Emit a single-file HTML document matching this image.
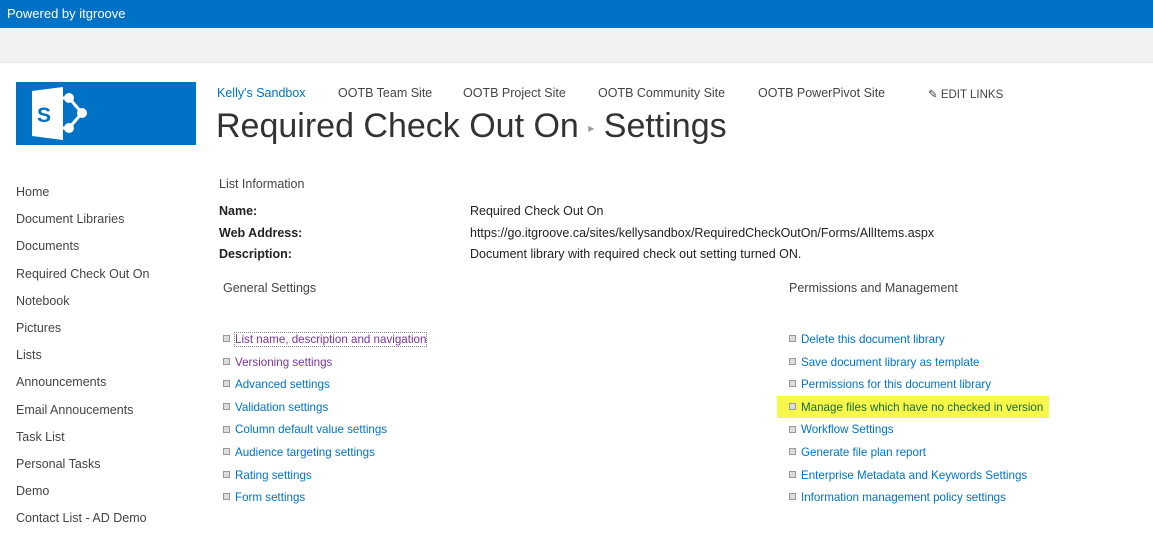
<!DOCTYPE html>
<html><head><style>
body{margin:0;width:1153px;height:531px;overflow:hidden;background:#fff;font-family:"Liberation Sans",sans-serif;font-size:12px;color:#444;position:relative}
.a{position:absolute;white-space:nowrap}
.top{position:absolute;left:0;top:0;width:1153px;height:28px;background:#0072c6;color:#fff;font-size:13px}
.gray{position:absolute;left:0;top:28px;width:1153px;height:34px;background:#f2f2f2;border-bottom:1px solid #e6e6e6}
.nav{color:#444;font-size:12.5px}
.l{color:#0072c6}
.v{color:#7b3596}
.sq{position:absolute;width:5px;height:5px;border:1px solid #999;background:#ddd}
b{color:#222}
</style></head><body>
<div class="top"><span class="a" style="left:7px;top:6px">Powered by itgroove</span></div>
<div class="gray"></div>
<div class="a" style="left:16px;top:82px;width:180px;height:63px;background:#0072c6">
<svg width="180" height="63" viewBox="0 0 180 63">
<polygon points="16,9 47,5 47,58 16,54" fill="#fff"/>
<text x="21" y="40" font-family="Liberation Sans" font-weight="bold" font-size="21" fill="#0072c6">S</text>
<polyline points="47,16 53,16 66,31 53,46 47,46" stroke="#fff" stroke-width="3" fill="none"/>
<circle cx="53" cy="16" r="5" fill="#fff"/><circle cx="66" cy="31" r="5" fill="#fff"/><circle cx="53" cy="46" r="5" fill="#fff"/>
</svg></div>
<div class="a l" style="left:217px;top:86px;font-size:12.5px">Kelly's Sandbox</div>
<div class="a" style="left:338px;top:86px;font-size:12.5px">OOTB Team Site</div>
<div class="a" style="left:463px;top:86px;font-size:12.5px">OOTB Project Site</div>
<div class="a" style="left:598px;top:86px;font-size:12.5px">OOTB Community Site</div>
<div class="a" style="left:758px;top:86px;font-size:12.5px">OOTB PowerPivot Site</div>
<div class="a" style="left:928px;top:87px;font-size:11.5px">✎ EDIT LINKS</div>
<div class="a" style="left:216px;top:107px;font-size:34px;color:#333;font-weight:300">Required Check Out On <span style="font-size:12px;color:#999;vertical-align:middle">▸</span> Settings</div>

<div class="a nav" style="left:16px;top:179px;line-height:27.2px">Home<br>Document Libraries<br>Documents<br>Required Check Out On<br>Notebook<br>Pictures<br>Lists<br>Announcements<br>Email Annoucements<br>Task List<br>Personal Tasks<br>Demo<br>Contact List - AD Demo</div>

<div class="a" style="left:219px;top:177px;font-size:12.5px">List Information</div>
<div class="a" style="left:219px;top:201px;line-height:21.5px;font-size:12.5px"><b>Name:</b><br><b>Web Address:</b><br><b>Description:</b></div>
<div class="a" style="left:470px;top:201px;line-height:21.5px;font-size:12.5px;color:#222">Required Check Out On<br>https://go.itgroove.ca/sites/kellysandbox/RequiredCheckOutOn/Forms/AllItems.aspx<br>Document library with required check out setting turned ON.</div>
<div class="a" style="left:223px;top:281px;font-size:12.5px">General Settings</div>
<div class="a" style="left:789px;top:281px;font-size:12.5px">Permissions and Management</div>

<div class="a" style="left:777px;top:396px;width:272px;height:22px;background:#f8f84a"></div>

<div class="a" style="left:235px;top:329px;line-height:22.6px;font-size:11.6px">
<span class="v" style="outline:1px dotted #888">List name, description and navigation</span><br><span class="v">Versioning settings</span><br><span class="l">Advanced settings</span><br><span class="l">Validation settings</span><br><span class="l">Column default value settings</span><br><span class="l">Audience targeting settings</span><br><span class="l">Rating settings</span><br><span class="l">Form settings</span></div>
<div class="a" style="left:801px;top:329px;line-height:22.6px;font-size:11.6px">
<span class="l">Delete this document library</span><br><span class="l">Save document library as template</span><br><span class="l">Permissions for this document library</span><br><span style="color:#1a6a3a">Manage files which have no checked in version</span><br><span class="l">Workflow Settings</span><br><span class="l">Generate file plan report</span><br><span class="l">Enterprise Metadata and Keywords Settings</span><br><span class="l">Information management policy settings</span></div>

<div class="sq" style="left:223px;top:335px"></div><div class="sq" style="left:223px;top:358px"></div><div class="sq" style="left:223px;top:380px"></div><div class="sq" style="left:223px;top:403px"></div><div class="sq" style="left:223px;top:426px"></div><div class="sq" style="left:223px;top:448px"></div><div class="sq" style="left:223px;top:471px"></div><div class="sq" style="left:223px;top:493px"></div>
<div class="sq" style="left:789px;top:335px"></div><div class="sq" style="left:789px;top:358px"></div><div class="sq" style="left:789px;top:380px"></div><div class="sq" style="left:789px;top:403px"></div><div class="sq" style="left:789px;top:426px"></div><div class="sq" style="left:789px;top:448px"></div><div class="sq" style="left:789px;top:471px"></div><div class="sq" style="left:789px;top:493px"></div>
</body></html>
